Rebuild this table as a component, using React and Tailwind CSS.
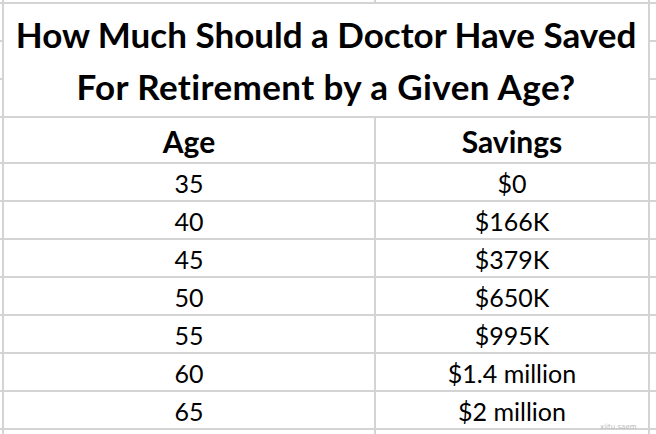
import React from "react";

const rows = [
    ["35", "$0"],
    ["40", "$166K"],
    ["45", "$379K"],
    ["50", "$650K"],
    ["55", "$995K"],
    ["60", "$1.4 million"],
    ["65", "$2 million"],
];

function Blank() {
    return <div className="bg-white" />;
}

export default function App() {
    return (
        <div className="relative w-[656px] h-[434px] overflow-hidden bg-white font-['Lato','Liberation_Sans',sans-serif] text-black">
            <div className="grid h-full gap-[2px] bg-[#d4d4d4] grid-cols-[2px_370px_272px_6px] grid-rows-[2px_36px_36px_36px_44px_36px_36px_36px_36px_36px_36px_36px_4px]">
                {/* top strip */}
                <Blank /><Blank /><Blank /><Blank />

                {/* title rows */}
                <Blank />
                <div className="row-span-3 col-span-2 bg-white flex flex-col items-center justify-center text-[35px] font-bold leading-[52px]">
                    <div>How Much Should a Doctor Have Saved</div>
                    <div className="tracking-[0.4px]">For Retirement by a Given Age?</div>
                </div>
                <Blank />
                <Blank /><Blank />
                <Blank /><Blank />

                {/* header */}
                <Blank />
                <div className="bg-white flex items-center justify-center text-[30px] font-bold pt-[2px]">Age</div>
                <div className="bg-white flex items-center justify-center text-[30px] font-bold pt-[2px]">Savings</div>
                <Blank />

                {rows.map(([age, amount]) => (
                    <React.Fragment key={age}>
                        <Blank />
                        <div className="bg-white flex items-center justify-center text-[25px] pt-[3px]">{age}</div>
                        <div className="bg-white flex items-center justify-center text-[25px] pt-[3px]">{amount}</div>
                        <Blank />
                    </React.Fragment>
                ))}

                {/* bottom strip */}
                <Blank /><Blank /><Blank /><Blank />
            </div>
            <div className="absolute left-[600px] top-[423px] text-[7px] leading-[8px] text-[#b8b8b8] font-['DejaVu_Sans',sans-serif]">xiitu.saem</div>
        </div>
    );
}
